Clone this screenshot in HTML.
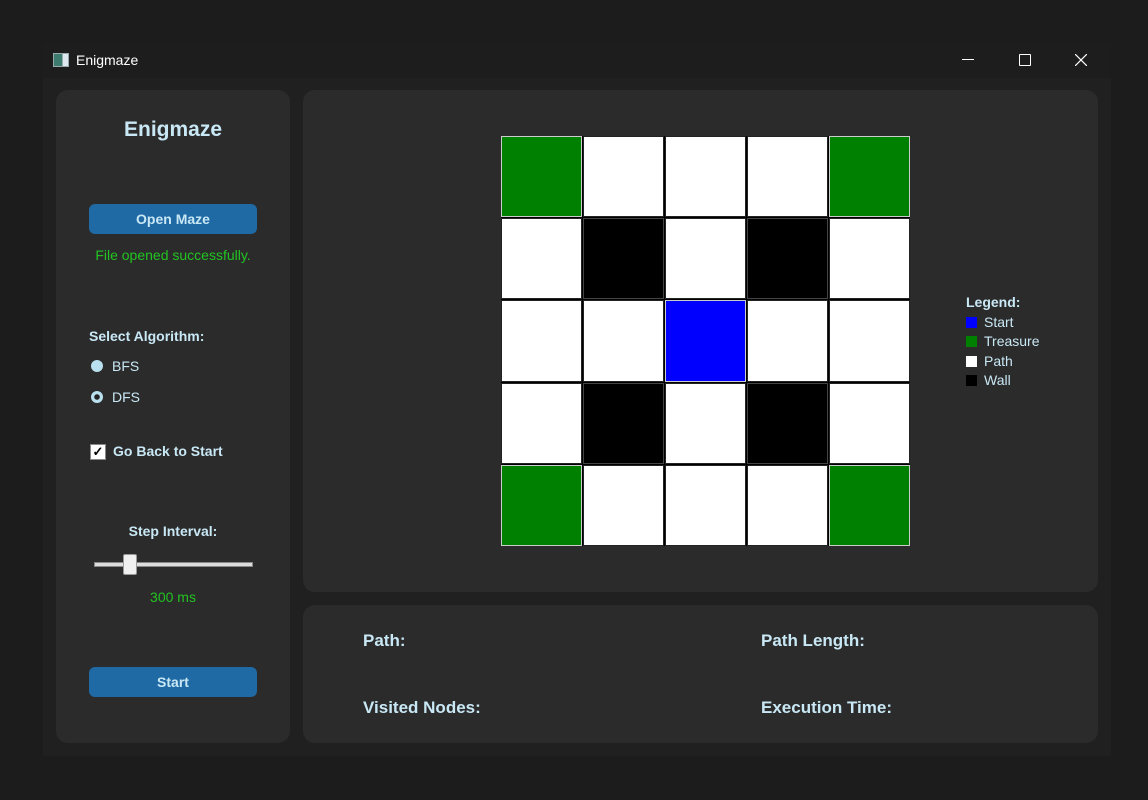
<!DOCTYPE html>
<html><head><style>
body{margin:0;width:1148px;height:800px;background:#1c1c1c;font-family:"Liberation Sans",sans-serif;position:relative;overflow:hidden}
.win{position:absolute;left:43px;top:43px;width:1068px;height:713px;background:#202020;}
.title{position:absolute;left:0;top:0;width:1068px;height:35px;background:#1d1d1d;color:#fff;font-size:14px}
.panel{position:absolute;background:#2b2b2b;border-radius:12px}
.lb{color:#c9e8f5;font-weight:bold;position:absolute}
.btn{position:absolute;left:33px;width:168px;height:30px;background:#1f6aa5;border-radius:6px;color:#c9e8f5;font-weight:bold;font-size:14px;text-align:center;line-height:30px}
.grid{position:absolute;left:501px;top:136px;width:409px;height:410px;background:#000;display:grid;grid-template-columns:repeat(5,1fr);grid-template-rows:repeat(5,1fr);gap:1px;padding:0}
.c{background:#fff;border:1px solid #222}
.g{background:#008000;border:1px solid #ccc}
.k{background:#000;border:1px solid #444}
.b{background:#0000ff;border:1px solid #ccc}
.sw{display:inline-block;width:11px;height:11px;vertical-align:-1px;margin-right:7px}
</style></head><body>
<div class="win">
<div class="title">
<div style="position:absolute;left:10px;top:10px;width:14px;height:12px;background:linear-gradient(90deg,#3c7b6e 0 60%,#dfe8ee 60%);border:1px solid #9aa"></div>
<div style="position:absolute;left:33px;top:9px">Enigmaze</div>
<div style="position:absolute;left:919px;top:16px;width:12px;height:1px;background:#fff"></div>
<div style="position:absolute;left:976px;top:11px;width:10px;height:10px;border:1px solid #fff;border-radius:1px"></div>
<svg style="position:absolute;left:1032px;top:11px" width="12" height="12"><path d="M0 0L12 12M12 0L0 12" stroke="#fff" stroke-width="1.2"/></svg>
</div>
</div>
<div class="panel" style="left:56px;top:90px;width:234px;height:653px">
<div class="lb" style="left:0;width:234px;text-align:center;top:28px;font-size:21px">Enigmaze</div>
<div class="btn" style="top:114px">Open Maze</div>
<div style="position:absolute;left:0;width:234px;text-align:center;top:157px;color:#22c322;font-size:14px">File opened successfully.</div>
<div class="lb" style="left:33px;top:238px;font-size:14px">Select Algorithm:</div>
<div style="position:absolute;left:35px;top:270px;width:12px;height:12px;border-radius:50%;background:#b8e0ee"></div>
<div style="position:absolute;left:56px;top:268px;color:#c9e8f5;font-size:14px">BFS</div>
<div style="position:absolute;left:35px;top:301px;width:12px;height:12px;border-radius:50%;background:radial-gradient(#222 0 2.5px,#b8e0ee 3px)"></div>
<div style="position:absolute;left:56px;top:299px;color:#c9e8f5;font-size:14px">DFS</div>
<div style="position:absolute;left:34px;top:354px;width:14px;height:14px;background:#fff;border:1px solid #888;color:#000;font-size:13px;line-height:14px;text-align:center;font-weight:bold">✓</div>
<div class="lb" style="left:57px;top:353px;font-size:14px">Go Back to Start</div>
<div class="lb" style="left:0;width:234px;text-align:center;top:433px;font-size:14px">Step Interval:</div>
<div style="position:absolute;left:38px;top:472px;width:157px;height:3px;background:#ddd;border:1px solid #888"></div>
<div style="position:absolute;left:67px;top:464px;width:12px;height:19px;background:#f0f0f0;border:1px solid #999;border-radius:2px"></div>
<div style="position:absolute;left:0;width:234px;text-align:center;top:499px;color:#22c322;font-size:14px">300 ms</div>
<div class="btn" style="top:577px">Start</div>
</div>
<div class="panel" style="left:303px;top:90px;width:795px;height:502px"></div>
<div class="grid">
<div class="g"></div><div class="c"></div><div class="c"></div><div class="c"></div><div class="g"></div>
<div class="c"></div><div class="k"></div><div class="c"></div><div class="k"></div><div class="c"></div>
<div class="c"></div><div class="c"></div><div class="b"></div><div class="c"></div><div class="c"></div>
<div class="c"></div><div class="k"></div><div class="c"></div><div class="k"></div><div class="c"></div>
<div class="g"></div><div class="c"></div><div class="c"></div><div class="c"></div><div class="g"></div>
</div>
<div style="position:absolute;left:966px;top:293px;color:#c9e8f5;font-size:14px;line-height:19.5px">
<b>Legend:</b><br>
<span class="sw" style="background:#00f"></span>Start<br>
<span class="sw" style="background:#008000"></span>Treasure<br>
<span class="sw" style="background:#fff"></span>Path<br>
<span class="sw" style="background:#000"></span>Wall
</div>
<div class="panel" style="left:303px;top:605px;width:795px;height:138px">
<div class="lb" style="left:60px;top:26px;font-size:17px">Path:</div>
<div class="lb" style="left:458px;top:26px;font-size:17px">Path Length:</div>
<div class="lb" style="left:60px;top:93px;font-size:17px">Visited Nodes:</div>
<div class="lb" style="left:458px;top:93px;font-size:17px">Execution Time:</div>
</div>
</body></html>
